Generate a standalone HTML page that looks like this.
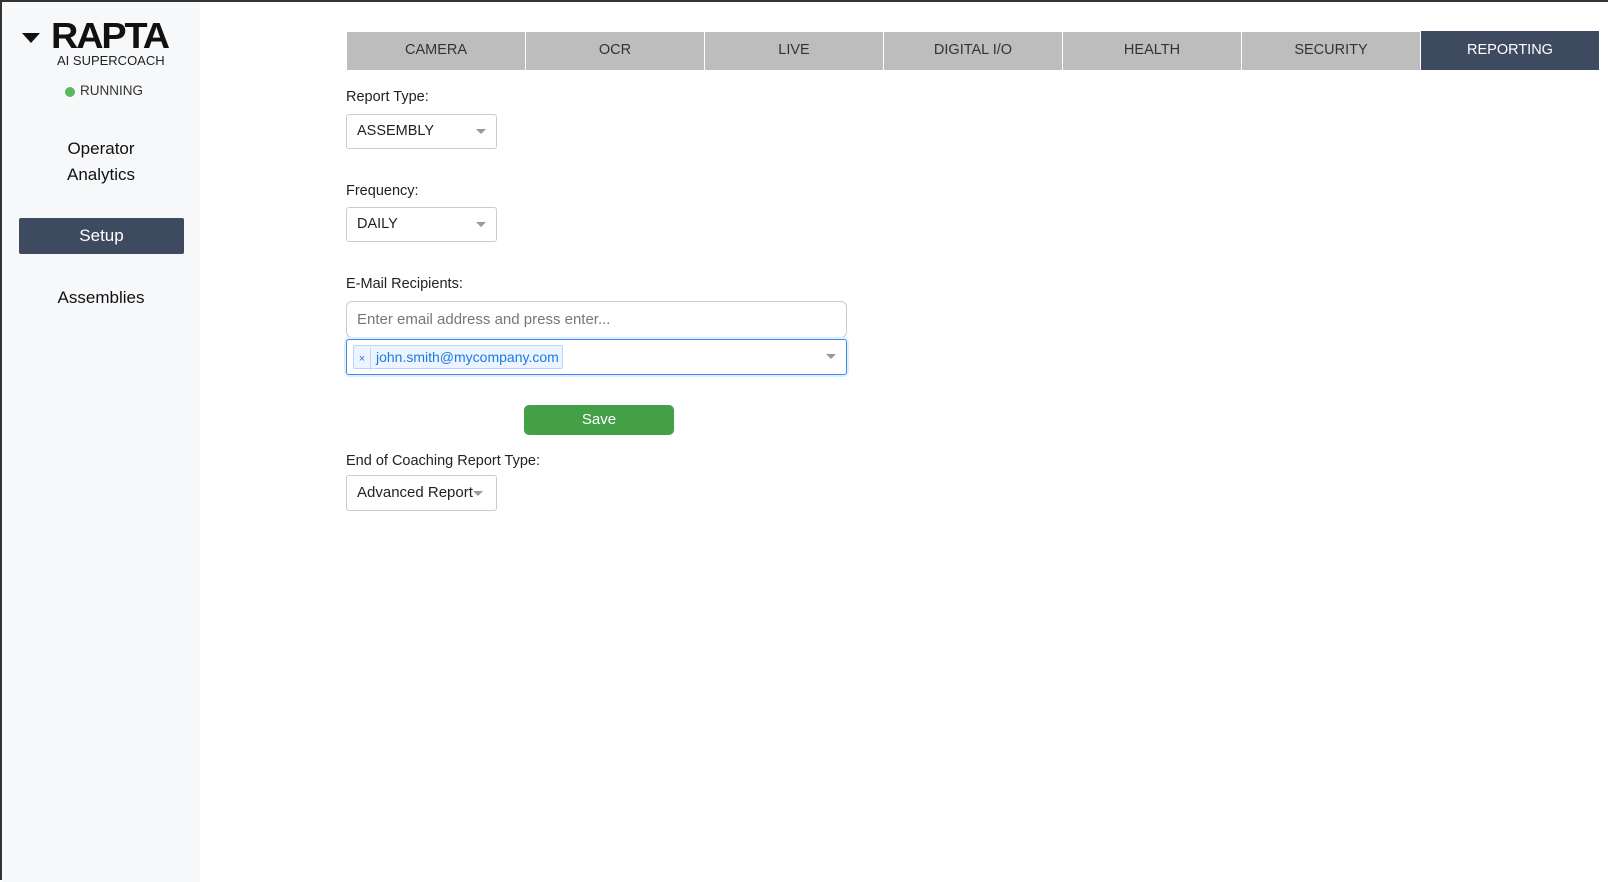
<!DOCTYPE html>
<html><head><meta charset="utf-8"><style>
*{box-sizing:border-box;margin:0;padding:0}
body{width:1608px;height:880px;overflow:hidden;background:#fff;font-family:"Liberation Sans",sans-serif;color:#222;position:relative;border-top:2px solid #333;border-left:2px solid #333}
.side{position:absolute;left:0;top:0;width:198px;height:880px;background:#f7f8fa}
.abs{position:absolute}
.tab{position:absolute;top:30px;height:38px;background:#bdbdbd;color:#333;font-size:14.5px;text-align:center;line-height:36px}
.lbl{position:absolute;left:344px;font-size:14.5px;color:#222}
.sel{position:absolute;left:344px;border:1px solid #ccc;border-radius:3px;background:#fff;font-size:14.5px;padding-left:10px;color:#222}
.caret{position:absolute;width:0;height:0;border-left:5px solid transparent;border-right:5px solid transparent;border-top:5px solid #999}
</style></head><body>
<div class="side">
<div class="abs" style="left:20px;top:31px;width:0;height:0;border-left:9px solid transparent;border-right:9px solid transparent;border-top:10px solid #111"></div>
<div class="abs" style="left:49px;top:14px;font-size:36px;font-weight:bold;letter-spacing:-2px;color:#111;line-height:40px;transform:scaleX(1.05);transform-origin:left">RAPTA</div>
<div class="abs" style="left:55px;top:51px;font-size:13px;color:#222">AI SUPERCOACH</div>
<div class="abs" style="left:63px;top:85px;width:10px;height:10px;border-radius:50%;background:#5cb85c"></div>
<div class="abs" style="left:78px;top:81px;font-size:13.5px;color:#333">RUNNING</div>
<div class="abs" style="left:0;width:198px;top:134px;text-align:center;font-size:17px;line-height:26px;color:#111">Operator<br>Analytics</div>
<div class="abs" style="left:17px;top:216px;width:165px;height:36px;background:#3d4a60;border-radius:2px;color:#fff;text-align:center;line-height:36px;font-size:17px">Setup</div>
<div class="abs" style="left:0;width:198px;top:286px;text-align:center;font-size:17px;color:#111">Assemblies</div>
</div>
<div class="tab" style="left:345px;width:178px">CAMERA</div>
<div class="tab" style="left:524px;width:178px">OCR</div>
<div class="tab" style="left:703px;width:178px">LIVE</div>
<div class="tab" style="left:882px;width:178px">DIGITAL I/O</div>
<div class="tab" style="left:1061px;width:178px">HEALTH</div>
<div class="tab" style="left:1240px;width:178px">SECURITY</div>
<div class="tab" style="left:1419px;width:178px;background:#3d4a60;color:#fff;height:39px;top:29px;line-height:39px">REPORTING</div>

<div class="lbl" style="top:87px">Report Type:</div>
<div class="sel" style="top:112px;width:151px;height:35px;line-height:33px">ASSEMBLY<div class="caret" style="left:129px;top:14px"></div></div>
<div class="lbl" style="top:181px">Frequency:</div>
<div class="sel" style="top:205px;width:151px;height:35px;line-height:33px">DAILY<div class="caret" style="left:129px;top:14px"></div></div>
<div class="lbl" style="top:274px">E-Mail Recipients:</div>
<div class="sel" style="top:299px;width:501px;height:37px;line-height:35px;border-radius:6px;color:#777;font-size:15px">Enter email address and press enter...</div>
<div class="sel" style="top:337px;width:501px;height:36px;border:1px solid #3b8cf0;border-radius:3px;box-shadow:0 0 0 2px #e3eefc;padding:0">
<div class="abs" style="left:6px;top:5px;height:24px;width:210px;border:1px solid #b8d6fb;background:#ebf4ff;border-radius:2px;color:#1f7ae0;font-size:14px;line-height:22px">
<span style="display:inline-block;width:17px;text-align:center;border-right:1px solid #b8d6fb;font-size:11px">×</span><span style="padding-left:5px">john.smith@mycompany.com</span></div>
<div class="caret" style="left:479px;top:14px"></div></div>
<div class="abs" style="left:522px;top:403px;width:150px;height:30px;background:#43a047;border-radius:5px;color:#fff;text-align:center;line-height:30px;font-size:15px">Save</div>
<div class="lbl" style="top:451px">End of Coaching Report Type:</div>
<div class="sel" style="top:473px;width:151px;height:36px;line-height:34px;font-size:15px">Advanced Report<div class="caret" style="left:126px;top:15px"></div></div>
</body></html>
